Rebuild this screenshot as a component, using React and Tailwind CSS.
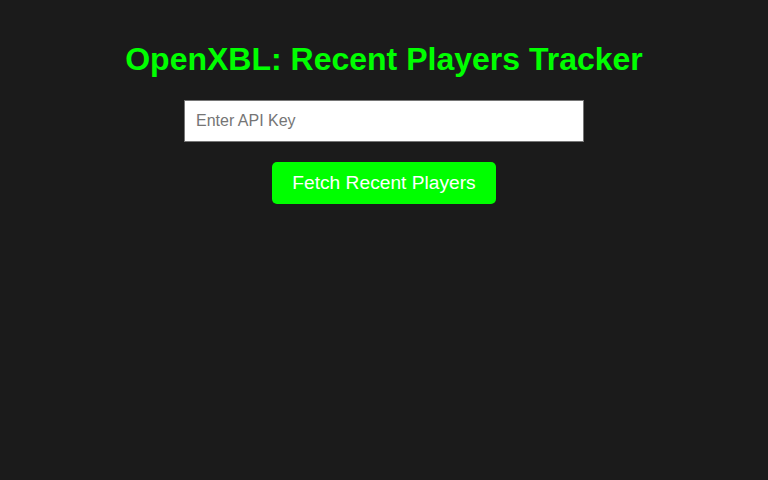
import { useState } from 'react'

const App = () => {
  const [apiKey, setApiKey] = useState('')

  return (
    <div className="min-h-[480px] bg-[#1b1b1b] flex flex-col items-center pt-[41px] font-['Liberation_Sans',Arial,sans-serif]">
      <h1 className="text-[32px] leading-[37px] font-bold text-[#00ff00]">
        OpenXBL: Recent Players Tracker
      </h1>

      {/* API key input */}
      <input
        type="text"
        value={apiKey}
        onChange={(e) => setApiKey(e.target.value)}
        placeholder="Enter API Key"
        className="mt-[22px] w-[400px] h-[42px] px-[11px] text-[16px] bg-white text-black border border-[#767676] placeholder:text-[#757575] outline-none"
      />

      <button className="mt-[20px] h-[42px] px-5 text-[19.2px] text-white bg-[#00ff00] rounded-[5px]">
        Fetch Recent Players
      </button>
    </div>
  )
}

export default App
